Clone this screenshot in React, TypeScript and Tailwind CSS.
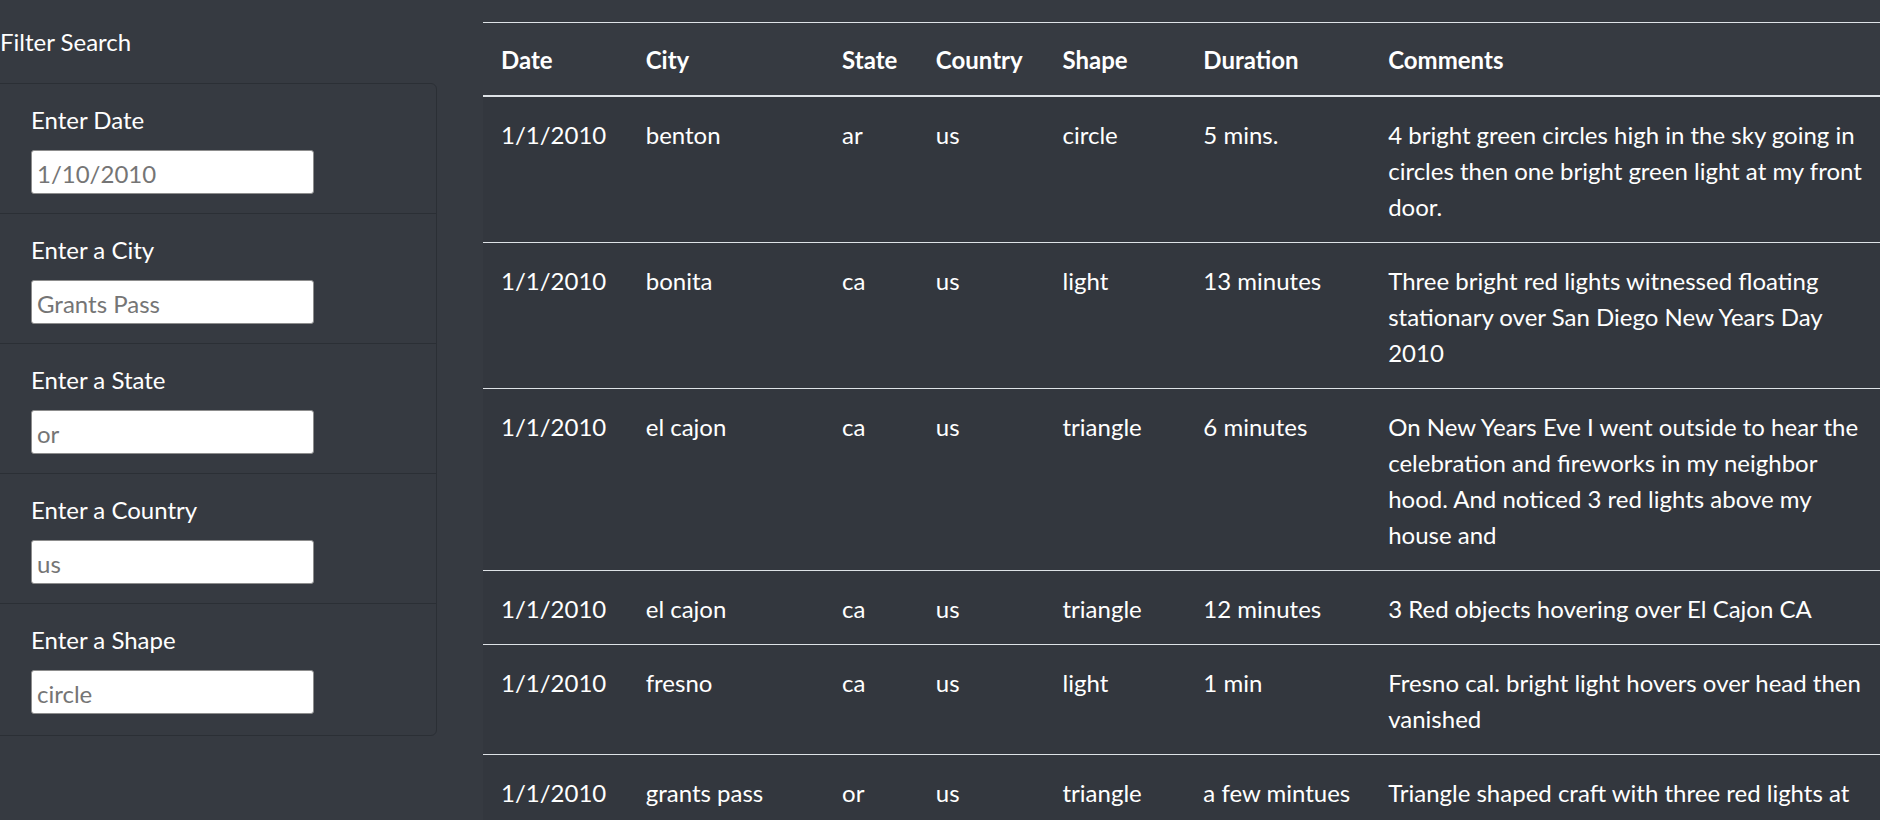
const filters = [
  { label: "Enter Date", placeholder: "1/10/2010" },
  { label: "Enter a City", placeholder: "Grants Pass" },
  { label: "Enter a State", placeholder: "or" },
  { label: "Enter a Country", placeholder: "us" },
  { label: "Enter a Shape", placeholder: "circle" },
];

const columns = [
  { title: "Date", width: "w-[145px]" },
  { title: "City", width: "w-[200px]" },
  { title: "State", width: "w-[94px]" },
  { title: "Country", width: "w-[127px]" },
  { title: "Shape", width: "w-[143px]" },
  { title: "Duration", width: "w-[185px]" },
  { title: "Comments", width: "w-[540px]" },
];

// comment lines are kept as in the original wrap
const sightings = [
  {
    date: "1/1/2010",
    city: "benton",
    state: "ar",
    country: "us",
    shape: "circle",
    duration: "5 mins.",
    comments: "4 bright green circles high in the sky going in\ncircles then one bright green light at my front\ndoor.",
  },
  {
    date: "1/1/2010",
    city: "bonita",
    state: "ca",
    country: "us",
    shape: "light",
    duration: "13 minutes",
    comments: "Three bright red lights witnessed floating\nstationary over San Diego New Years Day\n2010",
  },
  {
    date: "1/1/2010",
    city: "el cajon",
    state: "ca",
    country: "us",
    shape: "triangle",
    duration: "6 minutes",
    comments:
      "On New Years Eve I went outside to hear the\ncelebration and fireworks in my neighbor\nhood. And noticed 3 red lights above my\nhouse and",
  },
  {
    date: "1/1/2010",
    city: "el cajon",
    state: "ca",
    country: "us",
    shape: "triangle",
    duration: "12 minutes",
    comments: "3 Red objects hovering over El Cajon CA",
  },
  {
    date: "1/1/2010",
    city: "fresno",
    state: "ca",
    country: "us",
    shape: "light",
    duration: "1 min",
    comments: "Fresno cal. bright light hovers over head then\nvanished",
  },
  {
    date: "1/1/2010",
    city: "grants pass",
    state: "or",
    country: "us",
    shape: "triangle",
    duration: "a few mintues",
    comments: "Triangle shaped craft with three red lights at\nnight, hovering over Grants Pass OR on New\nYears Day",
  },
];

function FilterPanel() {
  return (
    <aside className="w-[437px] shrink-0 pt-[24px]">
      <h5 className="text-[24px] leading-[36px] text-white">Filter Search</h5>
      <ul className="mt-[23px] -ml-px rounded-r-[6px] border border-[#2b2f35]">
        {filters.map((f, i) => (
          <li key={f.label} className={`pl-[31px] pr-[30px] pt-[18px] pb-[19px] ${i > 0 ? "border-t border-[#2b2f35]" : ""}`}>
            <label className="block text-[24px] leading-[36px] text-white mb-[12px]">{f.label}</label>
            <input
              type="text"
              placeholder={f.placeholder}
              className="block w-[283px] h-[44px] rounded-[3px] border border-[#8d8d8d] bg-white px-[5px] pt-[2px] text-[24px] text-[#333] placeholder:text-[#757575] outline-none"
            />
          </li>
        ))}
        <li className="h-[2px]" />
      </ul>
    </aside>
  );
}

function SightingsTable() {
  return (
    <div className="ml-[46px] pt-[22px]">
      <table className="table-fixed border-collapse text-white text-[24px] leading-[36px]">
        <thead>
          <tr className="border-t border-[#dee2e6]">
            {columns.map((c) => (
              <th key={c.title} className={`${c.width} px-[18px] pt-[19px] pb-[17px] text-left font-bold border-b-2 border-[#dee2e6]`}>
                {c.title}
              </th>
            ))}
          </tr>
        </thead>
        <tbody className="bg-[#33373e]">
          {sightings.map((s, i) => (
            <tr key={i} className="border-t border-[#dee2e6] align-top">
              <td className="px-[18px] pt-[20px] pb-[17px]">{s.date}</td>
              <td className="px-[18px] pt-[20px] pb-[17px] whitespace-nowrap">{s.city}</td>
              <td className="px-[18px] pt-[20px] pb-[17px]">{s.state}</td>
              <td className="px-[18px] pt-[20px] pb-[17px]">{s.country}</td>
              <td className="px-[18px] pt-[20px] pb-[17px]">{s.shape}</td>
              <td className="px-[18px] pt-[20px] pb-[17px] whitespace-nowrap">{s.duration}</td>
              <td className="px-[18px] pt-[20px] pb-[17px] whitespace-pre-line">{s.comments}</td>
            </tr>
          ))}
        </tbody>
      </table>
    </div>
  );
}

export default function App() {
  return (
    <div
      className="w-[1880px] h-[820px] overflow-hidden bg-[#363a41] flex items-start"
      style={{ fontFamily: '"Lato", "Open Sans", "Noto Sans", sans-serif' }}
    >
      <FilterPanel />
      <SightingsTable />
    </div>
  );
}
